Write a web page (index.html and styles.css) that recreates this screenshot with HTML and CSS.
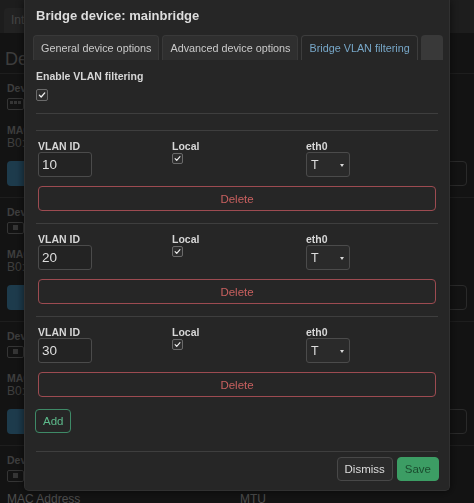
FILE: index.html
```html
<!DOCTYPE html>
<html lang="en">
<head>
<meta charset="utf-8">
<title>Bridge device: mainbridge</title>
<link rel="stylesheet" href="styles.css">
</head>
<body>
<div class="page">
  <div class="topbar"><span class="toptab">Interfaces</span><span class="toptab">Global network options</span></div>
  <h2 class="heading">Devices</h2>
  <div class="devlist">
    <div class="dev">
      <div class="dgrid">
        <div><div class="dlabel">Device</div><svg class="dicon" viewBox="0 0 17 12"><rect x="0.5" y="0.5" width="16" height="11" rx="1.5" fill="none" stroke="currentColor"/><rect x="3" y="3" width="3" height="3" fill="currentColor"/><rect x="7" y="3" width="3" height="3" fill="currentColor"/><rect x="11" y="3" width="3" height="3" fill="currentColor"/></svg></div>
        <div><div class="dlabel">Type</div><div class="dval">Bridge device</div></div>
        <div><div class="dlabel">MAC Address</div><div class="dval">B0:4E:26:8A:11:02</div></div>
        <div><div class="dlabel">MTU</div><div class="dval">1500</div></div>
      </div>
      <div class="dbtns"><span class="dbtn-blue"></span><span class="dbtn-out"></span></div>
    </div>
    <div class="dev">
      <div class="dgrid">
        <div><div class="dlabel">Device</div><svg class="dicon" viewBox="0 0 17 12"><rect x="0.5" y="0.5" width="16" height="11" rx="1.5" fill="none" stroke="currentColor"/><rect x="6" y="3" width="5" height="5" fill="currentColor"/></svg></div>
        <div><div class="dlabel">Type</div><div class="dval">Network device</div></div>
        <div><div class="dlabel">MAC Address</div><div class="dval">B0:4E:26:8A:11:02</div></div>
        <div><div class="dlabel">MTU</div><div class="dval">1500</div></div>
      </div>
      <div class="dbtns"><span class="dbtn-blue"></span><span class="dbtn-out"></span></div>
    </div>
    <div class="dev">
      <div class="dgrid">
        <div><div class="dlabel">Device</div><svg class="dicon" viewBox="0 0 17 12"><rect x="0.5" y="0.5" width="16" height="11" rx="1.5" fill="none" stroke="currentColor"/><rect x="6" y="3" width="5" height="5" fill="currentColor"/></svg></div>
        <div><div class="dlabel">Type</div><div class="dval">Network device</div></div>
        <div><div class="dlabel">MAC Address</div><div class="dval">B0:4E:26:8A:11:03</div></div>
        <div><div class="dlabel">MTU</div><div class="dval">1500</div></div>
      </div>
      <div class="dbtns"><span class="dbtn-blue"></span><span class="dbtn-out"></span></div>
    </div>
    <div class="dev dev-last">
      <div class="dgrid">
        <div><div class="dlabel">Device</div><svg class="dicon" viewBox="0 0 17 12"><rect x="0.5" y="0.5" width="16" height="11" rx="1.5" fill="none" stroke="currentColor"/><rect x="6" y="3" width="5" height="5" fill="currentColor"/></svg></div>
        <div><div class="dlabel">Type</div><div class="dval">Network device</div></div>
        <div><div class="dlabel dlabel-big">MAC Address</div></div>
        <div><div class="dlabel dlabel-big">MTU</div></div>
      </div>
    </div>
  </div>
</div>

<div class="backdrop"></div>

<div class="modal">
  <h3 class="title">Bridge device: mainbridge</h3>
  <ul class="tabs">
    <li class="tab">General device options</li>
    <li class="tab">Advanced device options</li>
    <li class="tab active">Bridge VLAN filtering</li>
    <li class="tabfill"></li>
  </ul>

  <div class="section">
    <div class="flabel">Enable VLAN filtering</div>
    <span class="cb"><svg viewBox="0 0 12 12"><path d="M2.8 6.2 L5 8.4 L9.3 3.5" fill="none" stroke="#f2f2f2" stroke-width="1.5" stroke-linecap="round" stroke-linejoin="round"/></svg></span>
  </div>

  <div class="vlans">
    <div class="vrow">
      <div class="cell"><div class="clabel">VLAN ID</div><div class="input">10</div></div>
      <div class="cell"><div class="clabel">Local</div><span class="cb cb-sm"><svg viewBox="0 0 12 12"><path d="M2.8 6.2 L5 8.4 L9.3 3.5" fill="none" stroke="#f2f2f2" stroke-width="1.5" stroke-linecap="round" stroke-linejoin="round"/></svg></span></div>
      <div class="cell"><div class="clabel">eth0</div><div class="select"><span>T</span><span class="arrow"></span></div></div>
      <button class="btn-del">Delete</button>
    </div>
    <div class="vrow">
      <div class="cell"><div class="clabel">VLAN ID</div><div class="input">20</div></div>
      <div class="cell"><div class="clabel">Local</div><span class="cb cb-sm"><svg viewBox="0 0 12 12"><path d="M2.8 6.2 L5 8.4 L9.3 3.5" fill="none" stroke="#f2f2f2" stroke-width="1.5" stroke-linecap="round" stroke-linejoin="round"/></svg></span></div>
      <div class="cell"><div class="clabel">eth0</div><div class="select"><span>T</span><span class="arrow"></span></div></div>
      <button class="btn-del">Delete</button>
    </div>
    <div class="vrow">
      <div class="cell"><div class="clabel">VLAN ID</div><div class="input">30</div></div>
      <div class="cell"><div class="clabel">Local</div><span class="cb cb-sm"><svg viewBox="0 0 12 12"><path d="M2.8 6.2 L5 8.4 L9.3 3.5" fill="none" stroke="#f2f2f2" stroke-width="1.5" stroke-linecap="round" stroke-linejoin="round"/></svg></span></div>
      <div class="cell"><div class="clabel">eth0</div><div class="select"><span>T</span><span class="arrow"></span></div></div>
      <button class="btn-del">Delete</button>
    </div>
  </div>

  <div class="addrow"><button class="btn-add">Add</button></div>

  <div class="footer">
    <button class="btn-dismiss">Dismiss</button>
    <button class="btn-save">Save</button>
  </div>
</div>
</body>
</html>
```

FILE: styles.css
```css
html, body {
  margin: 0;
  padding: 0;
  overflow: hidden;
}
body {
  width: 474px;
  height: 503px;
  background: #272727;
  font-family: "Liberation Sans", Arial, Helvetica, sans-serif;
  color: #dddddd;
}

/* ---------- background page ---------- */
.page {
  height: 503px;
  overflow: hidden;
  padding: 0 7px;
}
.topbar {
  height: 33px;
  margin: 0 -7px;
  padding: 0 0 0 4px;
  background: #3a3a3a;
  display: flex;
  align-items: flex-end;
  gap: 4px;
}
.toptab {
  height: 25px;
  line-height: 25px;
  padding: 0 7px;
  font-size: 12px;
  color: #8a8a8a;
  background: #444;
  border-radius: 4px 4px 0 0;
  white-space: nowrap;
}
.heading {
  margin: 15px 0 3px -2px;
  font-size: 18px;
  line-height: 22px;
  font-weight: normal;
  color: #7a7a7a;
}
.dev {
  height: 124px;
  box-sizing: border-box;
  border-top: 1px solid #3c3c3c;
  margin: 0 -7px;
  padding: 8px 7px 0;
}
.dgrid {
  display: grid;
  grid-template-columns: 233px 1fr;
  row-gap: 14px;
}
.dev-last .dgrid {
  row-gap: 11px;
}
.dlabel {
  font-size: 10.5px;
  line-height: 13px;
  font-weight: bold;
  color: #7c7c7c;
}
.dlabel-big {
  font-size: 12px;
  font-weight: normal;
  color: #9a9a9a;
}
.dval {
  font-size: 12px;
  line-height: 13px;
  color: #7c7c7c;
}
.dicon {
  display: block;
  width: 17px;
  height: 12px;
  margin-top: 3px;
  color: #6a6a6a;
}
.dbtns {
  display: flex;
  justify-content: space-between;
  margin-top: 11px;
}
.dbtn-blue {
  height: 25px;
  width: 100px;
  border-radius: 4px;
  background: #3b7699;
}
.dbtn-out {
  height: 25px;
  width: 70px;
  box-sizing: border-box;
  border: 1px solid #555;
  border-radius: 4px;
}

.backdrop {
  position: fixed;
  inset: 0;
  background: rgba(0, 0, 0, 0.5);
}

/* ---------- modal ---------- */
.modal {
  position: fixed;
  top: 0;
  left: 24px;
  width: 426px;
  box-sizing: border-box;
  background: #262626;
  border: 1px solid #313131;
  border-top: 0;
  border-radius: 0 0 5px 5px;
  padding: 8px 11px 9px 11px;
  box-shadow: 0 0 8px rgba(0, 0, 0, 0.6);
}
.title {
  margin: 0;
  font-size: 13px;
  line-height: 16px;
  font-weight: bold;
  color: #dcdcdc;
}
.tabs {
  list-style: none;
  margin: 11px -5px 0 -3px;
  padding: 0;
  display: flex;
  gap: 3px;
  height: 25px;
}
.tab {
  padding: 0 7px;
  font-size: 10.8px;
  line-height: 24px;
  white-space: nowrap;
  color: #cacaca;
  background: #2f2f2f;
  border: 1px solid #393939;
  border-bottom: 0;
  border-radius: 4px 4px 0 0;
}
.tab.active {
  background: #262626;
  color: #77a7c8;
  border-color: #3d3d3d;
}
.tabfill {
  flex: 1;
  background: #393939;
  border-radius: 4px 4px 0 0;
}

.section {
  padding: 10px 0 12px;
  border-bottom: 1px solid #3e3e3e;
}
.flabel {
  font-size: 10.5px;
  line-height: 13px;
  font-weight: bold;
  color: #d6d6d6;
}
.cb {
  display: block;
  width: 12px;
  height: 12px;
  box-sizing: border-box;
  margin-top: 6px;
  border: 1px solid #6a6a6a;
  border-radius: 2px;
  background: #2d2d2d;
}
.cb svg {
  display: block;
  width: 100%;
  height: 100%;
}
.cb-sm {
  width: 11px;
  height: 11px;
  margin-top: 1px;
}

.vlans {
  margin-top: 16px;
}
.vrow {
  border-top: 1px solid #3e3e3e;
  padding: 9px 2px 12px;
  display: grid;
  grid-template-columns: 134px 134px 1fr;
  row-gap: 9px;
}
.clabel {
  font-size: 10.5px;
  line-height: 12px;
  font-weight: bold;
  color: #d6d6d6;
}
.input {
  width: 54px;
  height: 25px;
  box-sizing: border-box;
  border: 1px solid #4b4b4b;
  border-radius: 3px;
  background: #232323;
  padding-left: 3px;
  font-size: 13.5px;
  line-height: 23px;
  color: #dedede;
}
.select {
  width: 44px;
  height: 25px;
  box-sizing: border-box;
  border: 1px solid #4b4b4b;
  border-radius: 3px;
  background: #2a2a2a;
  padding: 0 5px 0 4px;
  display: flex;
  align-items: center;
  justify-content: space-between;
  font-size: 12.5px;
  color: #dedede;
}
.arrow {
  width: 0;
  height: 0;
  border-left: 2.5px solid transparent;
  border-right: 2.5px solid transparent;
  border-top: 3.5px solid #d8d8d8;
  margin-top: 1px;
}
.btn-del {
  grid-column: 1 / -1;
  height: 25px;
  margin: 0;
  padding: 0;
  border: 1px solid #9d4b51;
  border-radius: 4px;
  background: transparent;
  font-family: inherit;
  font-size: 11.5px;
  color: #c8605f;
}

.addrow {
  padding-bottom: 18px;
  border-bottom: 1px solid #3e3e3e;
}
.btn-add {
  display: block;
  margin: 0 0 0 -1px;
  height: 24px;
  padding: 0 7px;
  border: 1px solid #3e8a67;
  border-radius: 4px;
  background: transparent;
  font-family: inherit;
  font-size: 11.5px;
  color: #5dba8b;
}

.footer {
  display: flex;
  justify-content: flex-end;
  gap: 4px;
  padding-top: 5px;
  margin-right: -1px;
}
.btn-dismiss,
.btn-save {
  height: 24px;
  margin: 0;
  padding: 0 7px;
  border-radius: 4px;
  font-family: inherit;
  font-size: 11.5px;
}
.btn-dismiss {
  border: 1px solid #484848;
  background: #2b2b2b;
  color: #dcdcdc;
}
.btn-save {
  border: 1px solid #3c9d64;
  background: #3c9d64;
  color: #1b4d2f;
}
```
